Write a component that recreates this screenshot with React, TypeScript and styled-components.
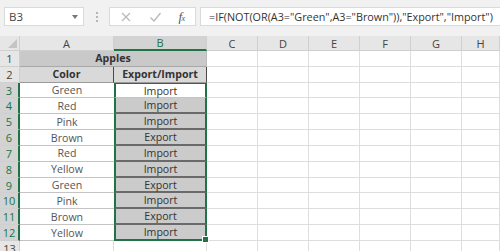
import styled, { createGlobalStyle, css } from "styled-components";

const GlobalStyle = createGlobalStyle`
  html, body {
    margin: 0;
    padding: 0;
    background: #ffffff;
    overflow: hidden;
  }
  body {
    font-family: "Open Sans", "Noto Sans", sans-serif;
  }
`;

const GREEN = "#217346";

const Page = styled.div`
  width: 500px;
  height: 251px;
  display: flex;
  flex-direction: column;
  background: #ffffff;
  overflow: hidden;
`;

const Toolbar = styled.div`
  height: 36px;
  flex: none;
  background: #f1f1f1;
  display: flex;
  align-items: flex-start;
  padding: 7px 0 0 4px;
  box-sizing: border-box;
`;

const NameBox = styled.div`
  width: 80px;
  height: 19px;
  box-sizing: border-box;
  background: #fff;
  border: 1px solid #dadada;
  display: flex;
  align-items: center;
  justify-content: space-between;
  padding: 0 5px 0 4px;
  font-size: 11.5px;
  color: #444;
`;

const Caret = styled.span`
  width: 0;
  height: 0;
  border-left: 3px solid transparent;
  border-right: 3px solid transparent;
  border-top: 4px solid #777;
`;

const Dots = styled.div`
  width: 25px;
  height: 19px;
  display: flex;
  flex-direction: column;
  align-items: center;
  justify-content: center;
  gap: 2px;
`;

const Dot = styled.span`
  width: 2px;
  height: 2px;
  background: #b5b5b5;
`;

const FuncBox = styled.div`
  width: 87px;
  height: 19px;
  box-sizing: border-box;
  background: #fff;
  border: 1px solid #dadada;
  display: flex;
  align-items: center;
  justify-content: space-around;
  padding: 0 2px;
`;

const Fx = styled.span`
  font-family: "Liberation Serif", serif;
  font-style: italic;
  font-size: 13px;
  color: #555;
  letter-spacing: -0.5px;
  sub {
    font-size: 8px;
    vertical-align: baseline;
  }
`;

const FormulaBox = styled.div`
  margin-left: 4px;
  flex: 1;
  height: 19px;
  box-sizing: border-box;
  background: #fff;
  border: 1px solid #dadada;
  border-right: none;
  display: flex;
  align-items: center;
  padding-left: 8px;
  font-size: 10.8px;
  color: #333;
  white-space: nowrap;
  overflow: hidden;
`;

const Sheet = styled.div`
  position: relative;
  flex: 1;
  display: grid;
  grid-template-columns: 20px 94px 93px 51px 51px 51px 51px 51px 1fr;
  grid-template-rows: 15px repeat(13, 15.83px);
  font-size: 10.6px;
  color: #444;
`;

const Corner = styled.div`
  background: #e6e6e6;
  border-right: 1px solid #cfcfcf;
  border-bottom: 1px solid #cfcfcf;
  position: relative;
  &::after {
    content: "";
    position: absolute;
    right: 2px;
    bottom: 2px;
    border-left: 9px solid transparent;
    border-bottom: 9px solid #c4c4c4;
  }
`;

const ColHead = styled.div<{ $active?: boolean }>`
  background: ${({ $active }) => ($active ? "#d3d3d3" : "#e6e6e6")};
  color: ${({ $active }) => ($active ? GREEN : "#444")};
  border-right: 1px solid #cfcfcf;
  border-bottom: ${({ $active }) => ($active ? `2px solid ${GREEN}` : "1px solid #cfcfcf")};
  display: flex;
  align-items: center;
  justify-content: center;
  box-sizing: border-box;
  font-size: 11px;
  line-height: 1;
`;

const RowHead = styled.div<{ $active?: boolean }>`
  background: ${({ $active }) => ($active ? "#d3d3d3" : "#e6e6e6")};
  color: ${({ $active }) => ($active ? GREEN : "#444")};
  border-bottom: 1px solid #cfcfcf;
  border-right: ${({ $active }) => ($active ? `2px solid ${GREEN}` : "1px solid #cfcfcf")};
  display: flex;
  align-items: center;
  justify-content: center;
  box-sizing: border-box;
  font-size: 11px;
`;

const Cell = styled.div`
  border-right: 1px solid #dedede;
  border-bottom: 1px solid #dedede;
  box-sizing: border-box;
`;

const TitleCell = styled.div`
  grid-column: span 2;
  background: #c9c9c9;
  border-right: 1px solid #bbb;
  border-bottom: 1px solid #a8a8a8;
  box-sizing: border-box;
  display: flex;
  align-items: center;
  justify-content: center;
  font-weight: 700;
  color: #333;
`;

const HeadCell = styled.div`
  background: #d9d9d9;
  border-right: 1px solid #4a4a4a;
  border-bottom: 1px solid #9a9a9a;
  box-sizing: border-box;
  display: flex;
  align-items: center;
  justify-content: center;
  font-weight: 700;
  color: #333;
`;

const ColorCell = styled.div`
  background: #fff;
  border-bottom: 1px solid #c4c4c4;
  box-sizing: border-box;
  display: flex;
  align-items: center;
  justify-content: center;
  color: #555;
`;

const ValueCell = styled.div<{ $first?: boolean; $last?: boolean }>`
  background: ${({ $first }) => ($first ? "#ffffff" : "#cbcbcb")};
  border-left: 2px solid ${GREEN};
  border-right: 2px solid ${GREEN};
  border-bottom: 2px solid #6a6a6a;
  box-sizing: border-box;
  display: flex;
  align-items: center;
  justify-content: center;
  color: #333;
  position: relative;
  ${({ $first }) =>
    $first &&
    css`
      border-top: 1px solid ${GREEN};
      border-bottom: 1px solid #c4c4c4;
    `}
  ${({ $last }) =>
    $last &&
    css`
      border-bottom: 2px solid ${GREEN};
    `}
`;

const FillHandle = styled.span`
  position: absolute;
  right: -4px;
  bottom: -4px;
  width: 5px;
  height: 5px;
  background: ${GREEN};
  border: 1px solid #fff;
`;

const columns = ["A", "B", "C", "D", "E", "F", "G", "H"];

const rows: [string, string][] = [
  ["Green", "Import"],
  ["Red", "Import"],
  ["Pink", "Import"],
  ["Brown", "Export"],
  ["Red", "Import"],
  ["Yellow", "Import"],
  ["Green", "Export"],
  ["Pink", "Import"],
  ["Brown", "Export"],
  ["Yellow", "Import"],
];

function EmptyCells({ count }: { count: number }) {
  return (
    <>
      {Array.from({ length: count }).map((_, i) => (
        <Cell key={i} />
      ))}
    </>
  );
}

export default function App() {
  return (
    <Page>
      <GlobalStyle />
      <Toolbar>
        <NameBox>
          B3
          <Caret />
        </NameBox>
        <Dots>
          <Dot />
          <Dot />
          <Dot />
        </Dots>
        <FuncBox>
          <svg width="12" height="12" viewBox="0 0 12 12">
            <path d="M2 2 L10 10 M10 2 L2 10" stroke="#b8b8b8" strokeWidth="1.2" />
          </svg>
          <svg width="13" height="12" viewBox="0 0 13 12">
            <path d="M1.5 6.5 L5 10 L11.5 2" stroke="#b8b8b8" strokeWidth="1.3" fill="none" />
          </svg>
          <Fx>
            f<sub>x</sub>
          </Fx>
        </FuncBox>
        <FormulaBox>=IF(NOT(OR(A3="Green",A3="Brown")),"Export","Import")</FormulaBox>
      </Toolbar>

      <Sheet>
        <Corner />
        {columns.map((c) => (
          <ColHead key={c} $active={c === "B"}>
            {c}
          </ColHead>
        ))}

        <RowHead>1</RowHead>
        <TitleCell>Apples</TitleCell>
        <EmptyCells count={6} />

        <RowHead>2</RowHead>
        <HeadCell>Color</HeadCell>
        <HeadCell>Export/Import</HeadCell>
        <EmptyCells count={6} />

        {rows.map(([color, value], i) => (
          <Row key={i} n={i + 3} color={color} value={value} first={i === 0} last={i === rows.length - 1} />
        ))}

        <RowHead>13</RowHead>
        <EmptyCells count={8} />
      </Sheet>
    </Page>
  );
}

function Row({
  n,
  color,
  value,
  first,
  last,
}: {
  n: number;
  color: string;
  value: string;
  first: boolean;
  last: boolean;
}) {
  return (
    <>
      <RowHead $active>{n}</RowHead>
      <ColorCell>{color}</ColorCell>
      <ValueCell $first={first} $last={last}>
        {value}
        {last && <FillHandle />}
      </ValueCell>
      <EmptyCells count={6} />
    </>
  );
}
